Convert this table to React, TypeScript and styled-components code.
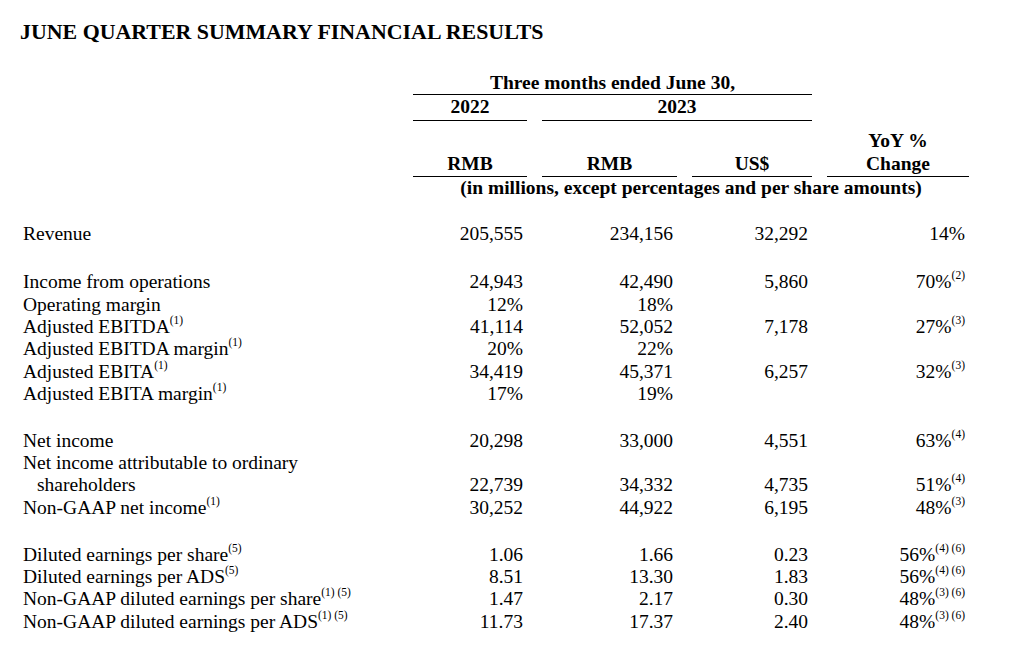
import React from 'react';
import styled, { createGlobalStyle } from 'styled-components';

const GlobalStyle = createGlobalStyle`
  body {
    margin: 0;
    background: #fff;
    color: #000;
    font-family: "Liberation Serif", "Times New Roman", serif;
  }
`;

const Page = styled.div`
  width: 1010px;
  padding-top: 19px;
`;

const Title = styled.h1`
  margin: 0 0 0 20px;
  font-size: 21.9px;
  line-height: 26px;
  font-weight: bold;
`;

const Table = styled.div`
  margin: 27px 0 0 23px;
  font-size: 19.5px;
  line-height: 22.4px;
`;

const Row = styled.div<{ $gap?: number }>`
  display: grid;
  grid-template-columns: 375px 114px 135px 120px 142px;
  column-gap: 15px;
  align-items: end;
  margin-top: ${(p) => p.$gap ?? 0}px;
`;

const Head = styled.div<{ $col: string; $rule?: boolean; $pad?: number }>`
  grid-column: ${(p) => p.$col};
  text-align: center;
  font-weight: bold;
  padding-bottom: ${(p) => p.$pad ?? 0}px;
  border-bottom: ${(p) => (p.$rule ? '1px solid #000' : 'none')};
`;

const Label = styled.div<{ $hang?: boolean }>`
  grid-column: 1;
  padding-left: ${(p) => (p.$hang ? 14 : 0)}px;
  text-indent: ${(p) => (p.$hang ? -14 : 0)}px;
`;

const Num = styled.div`
  text-align: right;
  padding-right: 4px;
  white-space: nowrap;
`;

const Note = styled.sup`
  font-size: 11.5px;
  line-height: 0;
  vertical-align: 9.5px;
`;

type Line = {
  label: string;
  note?: string;
  wrap?: string;
  v: [string, string, string, string];
  dn?: string;
};

const groups: { gap: number; rows: Line[] }[] = [
  {
    gap: 23.4,
    rows: [{ label: 'Revenue', v: ['205,555', '234,156', '32,292', '14%'] }],
  },
  {
    gap: 25.6,
    rows: [
      { label: 'Income from operations', v: ['24,943', '42,490', '5,860', '70%'], dn: '(2)' },
      { label: 'Operating margin', v: ['12%', '18%', '', ''] },
      { label: 'Adjusted EBITDA', note: '(1)', v: ['41,114', '52,052', '7,178', '27%'], dn: '(3)' },
      { label: 'Adjusted EBITDA margin', note: '(1)', v: ['20%', '22%', '', ''] },
      { label: 'Adjusted EBITA', note: '(1)', v: ['34,419', '45,371', '6,257', '32%'], dn: '(3)' },
      { label: 'Adjusted EBITA margin', note: '(1)', v: ['17%', '19%', '', ''] },
    ],
  },
  {
    gap: 24,
    rows: [
      { label: 'Net income', v: ['20,298', '33,000', '4,551', '63%'], dn: '(4)' },
      {
        label: 'Net income attributable to ordinary',
        wrap: 'shareholders',
        v: ['22,739', '34,332', '4,735', '51%'],
        dn: '(4)',
      },
      { label: 'Non-GAAP net income', note: '(1)', v: ['30,252', '44,922', '6,195', '48%'], dn: '(3)' },
    ],
  },
  {
    gap: 24.4,
    rows: [
      { label: 'Diluted earnings per share', note: '(5)', v: ['1.06', '1.66', '0.23', '56%'], dn: '(4) (6)' },
      { label: 'Diluted earnings per ADS', note: '(5)', v: ['8.51', '13.30', '1.83', '56%'], dn: '(4) (6)' },
      {
        label: 'Non-GAAP diluted earnings per share',
        note: '(1) (5)',
        v: ['1.47', '2.17', '0.30', '48%'],
        dn: '(3) (6)',
      },
      {
        label: 'Non-GAAP diluted earnings per ADS',
        note: '(1) (5)',
        v: ['11.73', '17.37', '2.40', '48%'],
        dn: '(3) (6)',
      },
    ],
  },
];

function DataRow({ line, gap }: { line: Line; gap?: number }) {
  return (
    <Row $gap={gap}>
      <Label $hang={!!line.wrap}>
        {line.label}
        {line.note && <Note>{line.note}</Note>}
        {line.wrap && (
          <>
            <br />
            {line.wrap}
          </>
        )}
      </Label>
      <Num>{line.v[0]}</Num>
      <Num>{line.v[1]}</Num>
      <Num>{line.v[2]}</Num>
      <Num>
        {line.v[3]}
        {line.dn && <Note>{line.dn}</Note>}
      </Num>
    </Row>
  );
}

export default function App() {
  return (
    <Page>
      <GlobalStyle />
      <Title>JUNE QUARTER SUMMARY FINANCIAL RESULTS</Title>
      <Table>
        <Row>
          <Head $col="2 / 5" $rule>
            Three months ended June 30,
          </Head>
        </Row>
        <Row $gap={1}>
          <Head $col="2" $rule $pad={1.6}>
            2022
          </Head>
          <Head $col="3 / 5" $rule $pad={1.6}>
            2023
          </Head>
        </Row>
        <Row $gap={9}>
          <Head $col="2" $rule $pad={1.2}>
            RMB
          </Head>
          <Head $col="3" $rule $pad={1.2}>
            RMB
          </Head>
          <Head $col="4" $rule $pad={1.2}>
            US$
          </Head>
          <Head $col="5" $rule $pad={1.2}>
            YoY %
            <br />
            Change
          </Head>
        </Row>
        <Row>
          <Head $col="2 / 6">(in millions, except percentages and per share amounts)</Head>
        </Row>
        {groups.map((g) =>
          g.rows.map((line, i) => <DataRow key={line.label} line={line} gap={i === 0 ? g.gap : 0} />)
        )}
      </Table>
    </Page>
  );
}
